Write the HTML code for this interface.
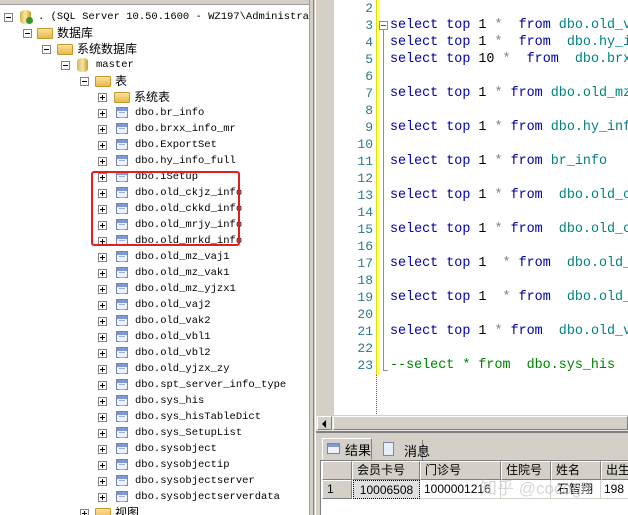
<!DOCTYPE html>
<html><head><meta charset="utf-8"><style>
*{margin:0;padding:0;box-sizing:border-box}
body{width:628px;height:515px;overflow:hidden;background:#d4d0c8;position:relative;font-family:"Liberation Mono","Noto Sans CJK SC",monospace}
.abs{position:absolute}
#tree{left:0;top:0;width:309px;height:515px;background:#fff;overflow:hidden}
.row{position:absolute;height:16px;font-size:10.5px;line-height:16px;white-space:nowrap;color:#000}
.pm{position:absolute;width:9px;height:9px;border:1px solid #848284;background:#fff;top:4px}
.pm:before{content:"";position:absolute;left:1px;top:3px;width:5px;height:1px;background:#000}
.pm.p:after{content:"";position:absolute;left:3px;top:1px;width:1px;height:5px;background:#000}
.tb{position:absolute;top:2px;width:12px;height:11px;border:1px solid #6f86b8;background:linear-gradient(#7f9ad2 0 3px,#eef2fb 3px)}
.tb:after{content:"";position:absolute;left:2px;top:4px;width:6px;height:4px;border-top:1px solid #9fb1d8;border-bottom:1px solid #9fb1d8}
.fd{position:absolute;top:3px;width:16px;height:11px;background:linear-gradient(#f7e39a,#e8b84a);border:1px solid #c69a2e;border-radius:1px}
.cj{font-family:"Liberation Sans","Noto Sans CJK SC",sans-serif;font-size:12px}
#ed{left:334px;top:0;width:294px;height:415px;background:#fff}
.ln{position:absolute;left:334px;width:39px;text-align:right;font-size:13px;color:#2b7a8a;font-family:"Liberation Mono",monospace;line-height:17px}
.cd{position:absolute;left:390px;font-size:13.4px;line-height:17px;white-space:pre;font-family:"Liberation Mono",monospace;color:#000}
.k{color:#0000a0}.s{color:#808080}.o{color:#008080}.c{color:#008000}
.hd{position:absolute;top:461px;height:19px;background:#d4d0c8;border-right:1px solid #808080;border-bottom:1px solid #808080;border-top:1px solid #fff;border-left:1px solid #fff;font-family:"Liberation Sans","Noto Sans CJK SC",sans-serif;font-size:12px;line-height:16px;padding-left:4px}
.cl{position:absolute;top:480px;height:19px;font-family:"Liberation Sans","Noto Sans CJK SC",sans-serif;font-size:12px;line-height:18px;border-right:1px solid #d4d0c8;border-bottom:1px solid #d4d0c8}
</style></head><body>
<div id="tree" class="abs">
<div class="abs" style="left:0;top:0;width:309px;height:5px;background:#d4d0c8;border-bottom:1px solid #a0a0a0"></div>
<div class="row" style="top:9px;left:0;width:309px">
 <span class="pm" style="left:4px"></span>
 <span class="abs" style="left:20px;top:1px;width:11px;height:14px;background:linear-gradient(90deg,#d9b54c,#f6e7a6,#c99a2b);border-radius:5px/3px"></span>
 <span class="abs" style="left:26px;top:8px;width:7px;height:7px;border-radius:50%;background:#2d9a2d"></span>
 <span class="abs" style="left:38px">. (SQL Server 10.50.1600 - WZ197\Administrato</span></div>
<div class="row" style="top:25px"><span class="pm" style="left:23px"></span><span class="fd" style="left:37px"></span><span class="abs cj" style="left:57px">数据库</span></div>
<div class="row" style="top:41px"><span class="pm" style="left:42px"></span><span class="fd" style="left:57px"></span><span class="abs cj" style="left:77px">系统数据库</span></div>
<div class="row" style="top:57px"><span class="pm" style="left:61px"></span><span class="abs" style="left:77px;top:1px;width:11px;height:14px;background:linear-gradient(90deg,#d9b54c,#f6e7a6,#c99a2b);border-radius:5px/3px"></span><span class="abs" style="left:96px">master</span></div>
<div class="row" style="top:73px"><span class="pm" style="left:80px"></span><span class="fd" style="left:95px"></span><span class="abs cj" style="left:115px">表</span></div>
<div class="row" style="top:89px"><span class="pm p" style="left:98px"></span><span class="fd" style="left:114px"></span><span class="abs cj" style="left:134px">系统表</span></div>
<div id="items"></div>
<div class="row" style="top:505px"><span class="pm p" style="left:80px"></span><span class="fd" style="left:95px"></span><span class="abs cj" style="left:115px">视图</span></div>
<div class="abs" style="left:91px;top:171px;width:149px;height:75px;border:2px solid #e02020;border-radius:3px"></div>
</div>
<script>
var n=["dbo.br_info","dbo.brxx_info_mr","dbo.ExportSet","dbo.hy_info_full","dbo.iSetup","dbo.old_ckjz_info","dbo.old_ckkd_info","dbo.old_mrjy_info","dbo.old_mrkd_info","dbo.old_mz_vaj1","dbo.old_mz_vak1","dbo.old_mz_yjzx1","dbo.old_vaj2","dbo.old_vak2","dbo.old_vbl1","dbo.old_vbl2","dbo.old_yjzx_zy","dbo.spt_server_info_type","dbo.sys_his","dbo.sys_hisTableDict","dbo.sys_SetupList","dbo.sysobject","dbo.sysobjectip","dbo.sysobjectserver","dbo.sysobjectserverdata"],h="";
for(var i=0;i<n.length;i++){h+='<div class="row" style="top:'+(105+i*16)+'px"><span class="pm p" style="left:98px"></span><span class="tb" style="left:116px"></span><span class="abs" style="left:135px">'+n[i]+'</span></div>';}
document.getElementById("items").innerHTML=h;
</script>
<div class="abs" style="left:309px;top:0;width:1px;height:515px;background:#a0a0a0"></div>
<div class="abs" style="left:313px;top:0;width:1px;height:515px;background:#808080"></div>
<div class="abs" style="left:315px;top:0;width:1px;height:515px;background:#fff"></div>
<div id="ed" class="abs"></div>
<div class="abs" style="left:376px;top:0;width:4px;height:375px;background:#ffff70;border-left:1px solid #e0e000"></div>
<div class="abs" style="left:376px;top:375px;width:1px;height:41px;border-left:1px dotted #2b7a8a"></div>
<div class="abs" style="left:383px;top:30px;width:1px;height:340px;background:#909090"></div>
<div class="abs" style="left:383px;top:370px;width:5px;height:1px;background:#909090"></div>
<div class="abs" style="left:379px;top:21px;width:9px;height:9px;border:1px solid #909090;background:#fff"><div style="position:absolute;left:1px;top:3px;width:5px;height:1px;background:#555"></div></div>
<div id="code"></div>
<script>
var L={2:"",3:'<span class="k">select top</span> 1 <span class="s">*</span>  <span class="k">from</span> <span class="o">dbo.old_v</span>',4:'<span class="k">select top</span> 1 <span class="s">*</span>  <span class="k">from</span>  <span class="o">dbo.hy_i</span>',5:'<span class="k">select top</span> 10 <span class="s">*</span>  <span class="k">from</span>  <span class="o">dbo.brx</span>',7:'<span class="k">select top</span> 1 <span class="s">*</span> <span class="k">from</span> <span class="o">dbo.old_mz</span>',9:'<span class="k">select top</span> 1 <span class="s">*</span> <span class="k">from</span> <span class="o">dbo.hy_inf</span>',11:'<span class="k">select top</span> 1 <span class="s">*</span> <span class="k">from</span> <span class="o">br_info</span>',13:'<span class="k">select top</span> 1 <span class="s">*</span> <span class="k">from</span>  <span class="o">dbo.old_c</span>',15:'<span class="k">select top</span> 1 <span class="s">*</span> <span class="k">from</span>  <span class="o">dbo.old_c</span>',17:'<span class="k">select top</span> 1  <span class="s">*</span> <span class="k">from</span>  <span class="o">dbo.old_</span>',19:'<span class="k">select top</span> 1  <span class="s">*</span> <span class="k">from</span>  <span class="o">dbo.old_</span>',21:'<span class="k">select top</span> 1 <span class="s">*</span> <span class="k">from</span>  <span class="o">dbo.old_v</span>',23:'<span class="c">--select * from  dbo.sys_his</span>'},c="";
for(var i=2;i<=23;i++){var y=i*17-34;c+='<div class="ln" style="top:'+y+'px">'+i+'</div>';if(L[i])c+='<div class="cd" style="top:'+y+'px">'+L[i]+'</div>';}
document.getElementById("code").innerHTML=c;
</script>
<div class="abs" style="left:316px;top:415px;width:312px;height:16px;background:#e8e6e0;border-top:1px solid #d4d0c8"></div>
<div class="abs" style="left:317px;top:416px;width:15px;height:14px;background:#d4d0c8;border:1px solid;border-color:#fff #808080 #808080 #fff"><div style="position:absolute;left:4px;top:3px;border-right:4px solid #000;border-top:4px solid transparent;border-bottom:4px solid transparent"></div></div>
<div class="abs" style="left:333px;top:416px;width:295px;height:14px;background:#d4d0c8;border:1px solid;border-color:#fff #808080 #808080 #fff"></div>
<div class="abs" style="left:316px;top:431px;width:312px;height:2px;background:#808080"></div>
<div class="abs" style="left:322px;top:438px;width:50px;height:22px;background:#d4d0c8;border:1px solid;border-color:#fff #808080 transparent #fff"></div>
<div class="abs" style="left:327px;top:443px;width:13px;height:11px;border:1px solid #6f86b8;background:linear-gradient(#7f9ad2 0 3px,#eef2fb 3px)"></div>
<div class="abs cj" style="left:345px;top:440px;font-size:13px">结果</div>
<div class="abs" style="left:373px;top:440px;width:50px;height:20px;border-right:1px solid #808080"></div>
<div class="abs" style="left:383px;top:442px;width:11px;height:14px;background:#e8eef8;border:1px solid #7a8aa8"></div>
<div class="abs cj" style="left:404px;top:441px;font-size:13px">消息</div>
<div class="abs" style="left:320px;top:460px;width:308px;height:55px;background:#fff;border-left:1px solid #808080;border-top:1px solid #808080"></div>
<div class="hd" style="left:322px;width:30px"></div>
<div class="hd" style="left:352px;width:68px">会员卡号</div>
<div class="hd" style="left:420px;width:81px">门诊号</div>
<div class="hd" style="left:501px;width:50px">住院号</div>
<div class="hd" style="left:551px;width:50px">姓名</div>
<div class="hd" style="left:601px;width:40px">出生</div>
<div class="hd" style="top:480px;left:322px;width:30px">1</div>
<div class="cl" style="left:353px;width:67px;background:#e0e0e0;border:1px dotted #000;text-align:center">10006508</div>
<div class="cl" style="left:420px;width:81px;padding-left:4px">1000001216</div>
<div class="cl" style="left:501px;width:50px"></div>
<div class="cl" style="left:551px;width:50px;padding-left:6px">石智翔</div>
<div class="cl" style="left:601px;width:30px;padding-left:3px">198</div>
<div class="abs cj" style="left:480px;top:474px;font-size:17px;color:rgba(200,200,200,.75)">知乎 @cocogh</div>
</body></html>
